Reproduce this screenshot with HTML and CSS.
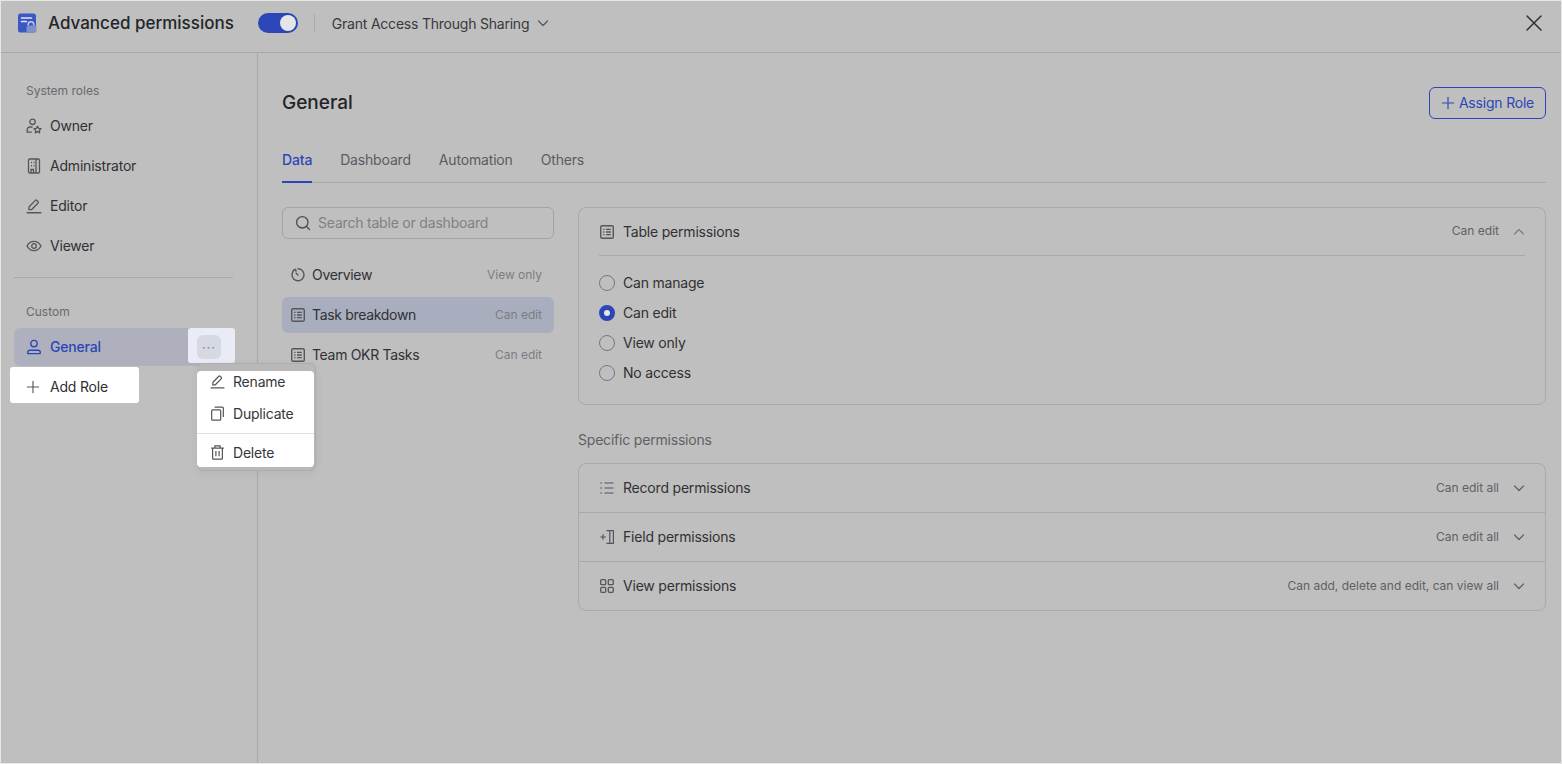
FILE: index.html
```html
<!DOCTYPE html>
<html lang="en">
<head>
  <meta charset="UTF-8" />
  <meta name="viewport" content="width=device-width, initial-scale=1.0" />
  <title>Advanced permissions</title>
  <link rel="stylesheet" href="styles.css">
</head>
<body>

  <svg class="icon-defs" width="0" height="0">
    <symbol id="i-table" viewBox="0 0 16 16">
      <rect x="1.700" y="1.700" width="12.600" height="12.600" rx="1.600" fill="none" stroke="currentColor" stroke-width="1.400"/>
      <path d="M4.200 5.300h1.300M7 5.300h4.800M4.200 8h1.300M7 8h4.800M4.200 10.700h1.300M7 10.700h4.800" fill="none" stroke="currentColor" stroke-width="1.300"/>
    </symbol>
    <symbol id="i-down" viewBox="0 0 12 12">
      <path d="M1.500 4l4.500 4.500L10.500 4" fill="none" stroke="currentColor" stroke-width="1.200" stroke-linecap="round" stroke-linejoin="round"/>
    </symbol>
    <symbol id="i-plus" viewBox="0 0 16 16">
      <path d="M8 1.500v13M1.500 8h13" fill="none" stroke="currentColor" stroke-width="1.300" stroke-linecap="round"/>
    </symbol>
    <symbol id="i-edit" viewBox="0 0 16 16">
      <path d="M1.200 14.800h13.600" fill="none" stroke="currentColor" stroke-width="1.500" stroke-linecap="round"/>
      <path d="M2.800 11.600l.4-2.800 6.200-6.400a1 1 0 0 1 1.400 0l1.300 1.200a1 1 0 0 1 0 1.400L5.700 11.500z" fill="none" stroke="currentColor" stroke-width="1.300" stroke-linejoin="round"/>
    </symbol>
  </svg>

  <div class="app">
    <header class="topbar">
      <svg class="logo" width="20" height="20" viewBox="0 0 20 20">
        <rect x="1" y="0.500" width="18" height="19" rx="2.500" fill="#3a57c4"/>
        <path d="M4.500 5h10M4.500 8.500h5" stroke="#e4e7f2" stroke-width="1.600" stroke-linecap="round"/>
        <path d="M11.200 12.500v-1a2.800 2.800 0 0 1 5.600 0v1" fill="none" stroke="#c9cee0" stroke-width="1.500"/>
        <rect x="9.500" y="12.500" width="10" height="7" rx="1.500" fill="#7f91c9"/>
      </svg>
      <h1 class="app-title">Advanced permissions</h1>
      <div class="toggle"><span class="toggle-knob"></span></div>
      <span class="topbar-sep"></span>
      <span class="share-mode">Grant Access Through Sharing</span>
      <svg class="share-caret" width="12" height="12"><use href="#i-down"/></svg>
      <svg class="close" width="18" height="18" viewBox="0 0 18 18">
        <path d="M2 2l14 14M16 2L2 16" fill="none" stroke="currentColor" stroke-width="1.500" stroke-linecap="round"/>
      </svg>
    </header>

    <div class="content">
      <aside class="sidebar">
        <div class="side-label">System roles</div>
        <div class="role">
          <svg class="role-icon" width="16" height="16" viewBox="0 0 16 16" fill="none" stroke="currentColor" stroke-width="1.300">
            <circle cx="6.500" cy="3.800" r="2.700"/>
            <path d="M6.500 9h-2.500a2.800 2.800 0 0 0-2.800 2.800v2.400h4.600"/>
            <path d="M11.500 8.200l1.100 2.200 2.400.3-1.700 1.700.4 2.400-2.200-1.100-2.200 1.100.4-2.400L8 10.700l2.400-.3z" stroke-linejoin="round"/>
          </svg>
          Owner
        </div>
        <div class="role">
          <svg class="role-icon" width="16" height="16" viewBox="0 0 16 16" fill="none" stroke="currentColor" stroke-width="1.300">
            <rect x="2.500" y="1" width="11" height="14" rx="1.200"/>
            <path d="M10 1v14M7.500 15v-3.500H5V15"/>
            <path d="M5 4.500h1M7.500 4.500h1M5 7.800h1M7.500 7.800h1" stroke-width="1.400"/>
          </svg>
          Administrator
        </div>
        <div class="role">
          <svg class="role-icon" width="16" height="16"><use href="#i-edit"/></svg>
          Editor
        </div>
        <div class="role">
          <svg class="role-icon" width="16" height="16" viewBox="0 0 16 16" fill="none" stroke="currentColor" stroke-width="1.300">
            <path d="M1 8c1.600-3 4-4.600 7-4.600S13.400 5 15 8c-1.600 3-4 4.600-7 4.600S2.600 11 1 8z" stroke-linejoin="round"/>
            <circle cx="8" cy="8" r="2.300"/>
          </svg>
          Viewer
        </div>
        <div class="side-rule"></div>
        <div class="side-label custom-label">Custom</div>
        <div class="role role-active">
          <svg class="role-icon" width="16" height="16" viewBox="0 0 16 16" fill="none" stroke="currentColor" stroke-width="1.400">
            <circle cx="8" cy="4.600" r="3.200"/>
            <path d="M1.800 13.200a2 2 0 0 1 2-2h8.400a2 2 0 0 1 2 2v1.400H1.800z" stroke-linejoin="round"/>
          </svg>
          General
          <div class="more-spot"><span class="more-btn">···</span></div>
        </div>
        <div class="add-role">
          <svg class="role-icon" width="14" height="14"><use href="#i-plus"/></svg>
          Add Role
        </div>

        <div class="menu">
          <div class="menu-inner">
            <div class="menu-item item-rename">
              <svg width="15" height="15"><use href="#i-edit"/></svg>
              Rename
            </div>
            <div class="menu-item">
              <svg width="15" height="15" viewBox="0 0 16 16" fill="none" stroke="currentColor" stroke-width="1.300">
                <rect x="1.800" y="4.200" width="9.600" height="10.800" rx="1"/>
                <path d="M5 1.300h8.200a1 1 0 0 1 1 1v9.500"/>
              </svg>
              Duplicate
            </div>
            <div class="menu-rule"></div>
            <div class="menu-item">
              <svg width="15" height="15" viewBox="0 0 16 16" fill="none" stroke="currentColor" stroke-width="1.300">
                <path d="M1.200 3.300h13.600M5.200 3.300V1h5.600v2.300M2.800 3.300v11a.8.800 0 0 0 .8.800h8.800a.8.800 0 0 0 .8-.8v-11M6.300 6.500v5.500M9.700 6.500v5.500"/>
              </svg>
              Delete
            </div>
          </div>
        </div>
      </aside>

      <main class="main">
        <div class="main-head">
          <h2 class="role-title">General</h2>
          <button class="assign-btn">
            <svg width="14" height="14"><use href="#i-plus"/></svg>
            Assign Role
          </button>
        </div>

        <nav class="tabs">
          <a class="tab tab-active">Data</a>
          <a class="tab">Dashboard</a>
          <a class="tab">Automation</a>
          <a class="tab">Others</a>
        </nav>

        <div class="columns">
          <div class="table-col">
            <div class="search">
              <svg width="16" height="16" viewBox="0 0 16 16" fill="none" stroke="currentColor" stroke-width="1.300">
                <circle cx="7.300" cy="7.300" r="5.700"/>
                <path d="M11.500 11.500l3 3" stroke-linecap="round"/>
              </svg>
              <span>Search table or dashboard</span>
            </div>
            <div class="table-row">
              <svg width="16" height="16" viewBox="0 0 16 16" fill="none" stroke="currentColor" stroke-width="1.400">
                <path d="M5.400 2.400A6 6 0 1 0 8 1.800" stroke-linecap="round"/>
                <path d="M6.200 6.200L8 8" stroke-linecap="round"/>
                <path d="M3.400 3l2.300-.7.400 2.300" stroke-linecap="round" stroke-linejoin="round" stroke-width="1.200"/>
              </svg>
              <span class="row-name">Overview</span>
              <span class="row-perm">View only</span>
            </div>
            <div class="table-row table-row-active">
              <svg width="16" height="16"><use href="#i-table"/></svg>
              <span class="row-name">Task breakdown</span>
              <span class="row-perm">Can edit</span>
            </div>
            <div class="table-row">
              <svg width="16" height="16"><use href="#i-table"/></svg>
              <span class="row-name">Team OKR Tasks</span>
              <span class="row-perm">Can edit</span>
            </div>
          </div>

          <div class="perm-col">
            <section class="panel">
              <div class="panel-head">
                <svg class="perm-icon" width="16" height="16"><use href="#i-table"/></svg>
                <span class="perm-name">Table permissions</span>
                <span class="perm-value">Can edit</span>
                <svg class="caret caret-up" width="12" height="12"><use href="#i-down"/></svg>
              </div>
              <div class="radios">
                <div class="radio-row"><span class="radio"></span>Can manage</div>
                <div class="radio-row"><span class="radio radio-on"></span>Can edit</div>
                <div class="radio-row"><span class="radio"></span>View only</div>
                <div class="radio-row"><span class="radio"></span>No access</div>
              </div>
            </section>

            <div class="specific-label">Specific permissions</div>

            <section class="panel">
              <div class="perm-row">
                <svg class="perm-icon" width="14" height="14" viewBox="0 0 14 14" fill="none" stroke="currentColor" stroke-width="1.200">
                  <path d="M4.500 2h9M4.500 7h9M4.500 12h9M.300 2h1.700M.300 7h1.700M.300 12h1.700"/>
                </svg>
                <span class="perm-name">Record permissions</span>
                <span class="perm-value">Can edit all</span>
                <svg class="caret" width="12" height="12"><use href="#i-down"/></svg>
              </div>
              <div class="perm-row">
                <svg class="perm-icon" width="14" height="14" viewBox="0 0 14 14" fill="none" stroke="currentColor" stroke-width="1.200">
                  <path d="M6.500 .600h6.900v12.800H6.500M9.800 .600v12.800M.300 7h5.500M3 4.300v5.400"/>
                </svg>
                <span class="perm-name">Field permissions</span>
                <span class="perm-value">Can edit all</span>
                <svg class="caret" width="12" height="12"><use href="#i-down"/></svg>
              </div>
              <div class="perm-row">
                <svg class="perm-icon" width="14" height="14" viewBox="0 0 14 14" fill="none" stroke="currentColor" stroke-width="1.300">
                  <rect x=".700" y=".700" width="5" height="5" rx="1"/>
                  <rect x="8.300" y=".700" width="5" height="5" rx="1"/>
                  <rect x=".700" y="8.300" width="5" height="5" rx="1"/>
                  <rect x="8.300" y="8.300" width="5" height="5" rx="1"/>
                </svg>
                <span class="perm-name">View permissions</span>
                <span class="perm-value">Can add, delete and edit, can view all</span>
                <svg class="caret" width="12" height="12"><use href="#i-down"/></svg>
              </div>
            </section>
          </div>
        </div>
      </main>
    </div>
  </div>

</body>
</html>
```

FILE: styles.css
```css
* {
  box-sizing: border-box;
  font-family: 'Inter', 'Liberation Sans', sans-serif;
}

body {
  margin: 0;
  height: 100vh;
  overflow: hidden;
  background: #e6e6e6;
  padding: 1px;
}

.icon-defs {
  position: absolute;
}

.app {
  height: 100%;
  display: flex;
  flex-direction: column;
  background: #bfbfbf;
  color: #2f3033;
  letter-spacing: -0.2px;
}

.topbar {
  height: 52px;
  flex-shrink: 0;
  display: flex;
  align-items: center;
  padding: 0 18px 7px 16px;
  border-bottom: 1px solid #a9a9a9;
}

.logo {
  margin-right: 11px;
}

.app-title {
  margin: 0;
  font-size: 17px;
  font-weight: 500;
  letter-spacing: 0;
  color: #242528;
}

.toggle {
  width: 40px;
  height: 20px;
  margin-left: 24px;
  border-radius: 10px;
  background: #2c46b8;
  position: relative;
}

.toggle-knob {
  position: absolute;
  top: 2px;
  right: 2px;
  width: 16px;
  height: 16px;
  border-radius: 50%;
  background: #e6e6e6;
}

.topbar-sep {
  width: 1px;
  height: 18px;
  margin: 0 17px 0 16px;
  background: #ababab;
}

.share-mode {
  font-size: 14px;
  letter-spacing: -0.22px;
  color: #38393c;
}

.share-caret {
  margin-left: 8px;
  color: #55565a;
}

.close {
  margin-left: auto;
  color: #2f3033;
}

.content {
  flex: 1;
  display: flex;
  min-height: 0;
}

.sidebar {
  width: 257px;
  flex-shrink: 0;
  position: relative;
  padding: 28px 24px 0 13px;
  border-right: 1px solid #a9a9a9;
}

.side-label {
  height: 20px;
  line-height: 20px;
  padding-left: 12px;
  margin-bottom: 5px;
  font-size: 12px;
  letter-spacing: 0;
  color: #68696c;
}

.role {
  height: 40px;
  display: flex;
  align-items: center;
  gap: 8px;
  padding: 0 0 2px 12px;
  font-size: 14px;
  color: #303134;
}

.role-icon {
  margin-top: 2px;
  color: #55565a;
  flex-shrink: 0;
}

.side-rule {
  height: 1px;
  margin-top: 11px;
  background: #a9a9a9;
}

.custom-label {
  margin-top: 24px;
  margin-bottom: 6px;
}

.role-active {
  height: 38px;
  position: relative;
  border-radius: 6px;
  background: #aeb1bd;
  color: #2c46b8;
  font-weight: 500;
}

.role-active .role-icon {
  color: #2c46b8;
}

.more-spot {
  position: absolute;
  left: 174px;
  top: 0;
  width: 47px;
  height: 35px;
  display: flex;
  align-items: center;
  padding: 3px 0 0 9px;
  border-radius: 3px;
  background: #e9ebf6;
}

.more-btn {
  width: 24px;
  height: 24px;
  display: flex;
  align-items: center;
  justify-content: center;
  border-radius: 6px;
  background: #d6d8e2;
  font-size: 13px;
  letter-spacing: 1px;
  font-weight: 400;
  color: #85868c;
}

.add-role {
  width: 129px;
  height: 36px;
  margin: 1px 0 0 -4px;
  display: flex;
  align-items: center;
  gap: 10px;
  padding: 2px 0 0 16px;
  border-radius: 3px;
  background: #fff;
  font-size: 14px;
  color: #2f3033;
}

.menu {
  position: absolute;
  left: 196px;
  top: 310px;
  width: 119px;
  height: 108px;
  padding: 7px 1px 3px 0;
  border: 1px solid #adadad;
  border-left: none;
  border-radius: 6px;
  background: #b8b8b8;
  box-shadow: 0 2px 8px rgba(0, 0, 0, 0.06);
  z-index: 2;
}

.menu-inner {
  height: 96px;
  overflow: hidden;
  border-radius: 4px;
  background: #fff;
}

.menu-item {
  height: 32px;
  display: flex;
  align-items: center;
  gap: 8px;
  padding: 1px 0 0 13px;
  font-size: 14px;
  color: #36373a;
}

.menu-item svg {
  margin-bottom: 1px;
  color: #55565a;
  flex-shrink: 0;
}

.item-rename {
  margin-top: -6px;
}

.menu-rule {
  height: 1px;
  margin: 4px 0 2px;
  background: #dedfe1;
}

.main {
  flex: 1;
  min-width: 0;
  padding: 34px 15px 0 24px;
}

.main-head {
  display: flex;
  align-items: center;
  justify-content: space-between;
  height: 32px;
}

.role-title {
  margin: 0 0 2px;
  font-size: 19px;
  font-weight: 500;
  letter-spacing: 0;
  color: #242528;
}

.assign-btn {
  height: 32px;
  width: 117px;
  display: flex;
  align-items: center;
  justify-content: center;
  gap: 4px;
  padding: 0 0 2px;
  border: 1px solid #2c46b8;
  border-radius: 6px;
  background: transparent;
  font-size: 14px;
  letter-spacing: -0.2px;
  color: #2c46b8;
}

.assign-btn svg {
  margin-top: 2px;
}

.tabs {
  display: flex;
  gap: 28px;
  margin-top: 25px;
  height: 39px;
  border-bottom: 1px solid #a9a9a9;
}

.tab {
  height: 39px;
  line-height: 29px;
  padding-top: 1px;
  font-size: 14px;
  letter-spacing: -0.17px;
  color: #5b5c60;
}

.tab-active {
  color: #2c46b8;
  font-weight: 500;
  border-bottom: 2px solid #2c46b8;
}

.columns {
  display: flex;
  gap: 24px;
  margin-top: 24px;
}

.table-col {
  width: 272px;
  flex-shrink: 0;
}

.search {
  height: 32px;
  margin-bottom: 18px;
  display: flex;
  align-items: center;
  gap: 7px;
  padding: 0 0 2px 12px;
  border: 1px solid #a4a4a4;
  border-radius: 6px;
  font-size: 14px;
  color: #808184;
}

.search svg {
  margin-top: 2px;
  color: #4c4d50;
}

.table-row {
  height: 36px;
  margin-bottom: 4px;
  display: flex;
  align-items: center;
  padding: 0 12px 2px 8px;
  border-radius: 6px;
  font-size: 14px;
}

.table-row svg {
  margin-top: 2px;
  color: #55565a;
  flex-shrink: 0;
}

.table-row-active {
  background: #a9aebf;
}

.row-name {
  margin-left: 6px;
  letter-spacing: -0.32px;
  color: #303134;
}

.row-perm {
  margin-left: auto;
  font-size: 12px;
  letter-spacing: -0.03px;
  color: #7c7d82;
}

.perm-col {
  flex: 1;
  min-width: 0;
}

.panel {
  border: 1px solid #a9a9a9;
  border-radius: 8px;
}

.panel-head {
  height: 48px;
  margin: 0 20px;
  display: flex;
  align-items: center;
  border-bottom: 1px solid #a9a9a9;
}

.perm-icon {
  color: #55565a;
  flex-shrink: 0;
}

.perm-name {
  margin-left: 8px;
  font-size: 14px;
  color: #303134;
}

.perm-value {
  margin-left: auto;
  padding-bottom: 2px;
  font-size: 12px;
  letter-spacing: 0;
  color: #606165;
}

.caret {
  margin-left: 14px;
  color: #606165;
}

.caret-up {
  transform: rotate(180deg);
  color: #7c7d82;
}

.radios {
  padding: 12px 20px 16px;
}

.radio-row {
  height: 30px;
  display: flex;
  align-items: center;
  gap: 8px;
  padding-bottom: 2px;
  font-size: 14px;
  color: #303134;
}

.radio {
  width: 16px;
  height: 16px;
  margin-top: 2px;
  border-radius: 50%;
  border: 1px solid #77787b;
}

.radio-on {
  border: 5px solid #2c46b8;
  background: #e6e6e6;
}

.specific-label {
  margin: 25px 0 13px;
  height: 20px;
  line-height: 20px;
  font-size: 14px;
  color: #606165;
}

.perm-row {
  height: 49px;
  padding: 0 20px 2px;
  display: flex;
  align-items: center;
  border-bottom: 1px solid #a9a9a9;
}

.perm-row .perm-icon {
  margin: 2px 1px 0;
}

.perm-row .perm-value {
  padding-bottom: 0;
}

.perm-row .caret {
  margin-top: 2px;
}

.perm-row:last-child {
  height: 48px;
  border-bottom: none;
}
```
